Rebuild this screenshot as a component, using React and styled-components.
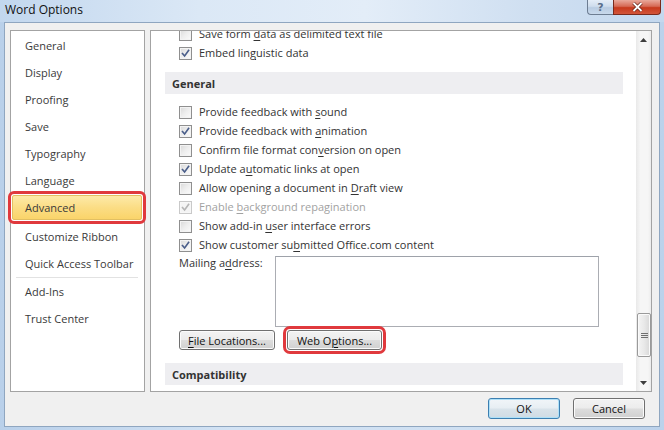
import React from "react";
import styled, { createGlobalStyle, css } from "styled-components";

const GlobalStyle = createGlobalStyle`
  html, body { margin: 0; padding: 0; background: #ffffff; }
  body { font-family: "Open Sans", "Noto Sans", Arial, sans-serif; }
  * { box-sizing: border-box; }
`;

const FONT = `"Open Sans", "Noto Sans", "Liberation Sans", sans-serif`;

const Window = styled.div`
  width: 664px;
  height: 430px;
  display: flex;
  flex-direction: column;
  background: linear-gradient(to right, #b9d0ea 0%, #d3e3f4 35%, #cfe0f2 70%, #bcd2eb 100%);
  font-family: ${FONT};
  overflow: hidden;
`;

const TitleBar = styled.div`
  height: 22px;
  flex: none;
  display: flex;
  justify-content: space-between;
  align-items: flex-start;
  background: linear-gradient(to right, #c2d7ee 0%, #dbe8f6 30%, #e3edf8 55%, #cfdff1 80%, #c4d8ee 100%);
`;

const Title = styled.div`
  padding: 2px 0 0 5px;
  font-size: 12px;
  line-height: 15px;
  color: #111;
`;

const Caption = styled.div`
  display: flex;
  margin-right: 3px;
`;

const CaptionButton = styled.div`
  height: 15px;
  display: flex;
  align-items: center;
  justify-content: center;
  border: 1px solid #6d7d92;
  border-top: none;
  ${(p) =>
    p.$close
      ? css`
          width: 48px;
          border-radius: 0 0 4px 0;
          background: linear-gradient(#e9a99b 0%, #d66a55 45%, #c7391c 55%, #d2553a 100%);
          border-color: #7a2a1c;
        `
      : css`
          width: 26px;
          border-right: none;
          border-radius: 0 0 0 4px;
          background: linear-gradient(#e4edf7 0%, #cfdded 45%, #b9cce2 55%, #c8d9ec 100%);
        `}
`;

const HelpGlyph = styled.span`
  font-family: "DejaVu Sans", sans-serif;
  font-size: 11px;
  font-weight: bold;
  line-height: 13px;
  color: #5a6f8c;
`;

const Client = styled.div`
  flex: 1;
  margin: 0 4px 3px 4px;
  border: 1px solid #8fa6c0;
  background: #f0f0f0;
  padding: 7px 7px 0 5px;
  display: flex;
  flex-direction: column;
`;

const Panels = styled.div`
  height: 362px;
  display: flex;
  gap: 5px;
`;

const NavPanel = styled.div`
  width: 135px;
  flex: none;
  background: #fff;
  border: 1px solid #a3a3a3;
  padding-top: 1px;
  display: flex;
  flex-direction: column;
`;

const NavItem = styled.div`
  height: 25px;
  margin: 1px 2px 1px 1px;
  padding-left: 12px;
  display: flex;
  align-items: center;
  font-size: 11px;
  color: #3a3a3a;
  border: 1px solid transparent;
  border-radius: 2px;
  ${(p) =>
    p.$selected &&
    css`
      margin-bottom: 3px;
      background: linear-gradient(#fdeaa8 0%, #fbdd85 50%, #fad46a 100%);
      border-color: #e2bf62;
      outline: 3px solid #e0393d;
      outline-offset: 1px;
    `}
`;

const NavSep = styled.div`
  height: 1px;
  margin: 0 6px 0 5px;
  background: #e2e2e2;
`;

const ContentPanel = styled.div`
  flex: 1;
  display: flex;
  background: #fff;
  border: 1px solid #a3a3a3;
  overflow: hidden;
`;

const Viewport = styled.div`
  flex: 1;
  overflow: hidden;
`;

const Content = styled.div`
  margin-top: -7px;
  padding: 0 13px 0 14px;
  display: flex;
  flex-direction: column;
`;

const Row = styled.div`
  height: 19px;
  padding-left: 14px;
  display: flex;
  align-items: center;
  gap: 7px;
  font-size: 11px;
  color: ${(p) => (p.$disabled ? "#a2a2a2" : "#333")};
  white-space: nowrap;
`;

const Box = styled.span`
  width: 13px;
  height: 13px;
  flex: none;
  margin-top: 1px;
  display: flex;
  align-items: center;
  justify-content: center;
  border: 1px solid ${(p) => (p.$disabled ? "#c9c9c9" : "#8f8f8f")};
  background: ${(p) =>
    p.$disabled ? "#f4f4f4" : "linear-gradient(135deg, #d8d8d8 0%, #eeeeee 50%, #fbfbfb 100%)"};
  box-shadow: inset 0 0 0 1px ${(p) => (p.$disabled ? "#f7f7f7" : "#f3f3f3")};
`;

const Key = styled.span`
  text-decoration: underline;
  text-underline-offset: 2px;
`;

const SectionHeader = styled.div`
  height: 22px;
  margin: ${(p) => p.$m || "0"};
  padding-left: 7px;
  display: flex;
  align-items: center;
  background: #eeeef1;
  font-size: 11px;
  font-weight: bold;
  color: #333;
`;

const MailRow = styled.div`
  margin-top: 2px;
  padding-left: 14px;
  display: flex;
  align-items: flex-start;
`;

const MailLabel = styled.div`
  width: 96px;
  flex: none;
  font-size: 11px;
  line-height: 13px;
  color: #333;
`;

const AddressBox = styled.div`
  width: 324px;
  height: 71px;
  border: 1px solid #abadb3;
  border-top-color: #9ea2aa;
  background: #fff;
`;

const ButtonRow = styled.div`
  margin-top: 3px;
  padding-left: 14px;
  display: flex;
  gap: 12px;
`;

const Button = styled.div`
  width: ${(p) => p.$w}px;
  height: ${(p) => p.$h || 20}px;
  flex: none;
  display: flex;
  align-items: center;
  justify-content: center;
  font-size: 11px;
  color: #111;
  border: 1px solid #707070;
  border-radius: 3px;
  background: linear-gradient(#f3f3f3 0%, #ececec 48%, #dddddd 52%, #d0d0d0 100%);
  box-shadow: inset 0 0 0 1px #fbfbfb;
  ${(p) =>
    p.$default &&
    css`
      border-color: #3c7fb1;
      box-shadow: inset 0 0 0 1px #aee0f8;
      background: linear-gradient(#f1f5f8 0%, #e7eef3 48%, #d9e3ea 52%, #cfdbe4 100%);
    `}
  ${(p) =>
    p.$marked &&
    css`
      outline: 3px solid #e0393d;
      outline-offset: 1px;
    `}
`;

const ScrollBar = styled.div`
  width: 15px;
  flex: none;
  display: flex;
  flex-direction: column;
  background: linear-gradient(to right, #e9e9e9 0%, #f6f6f6 30%, #f6f6f6 80%, #ececec 100%);
`;

const Arrow = styled.div`
  height: 17px;
  flex: none;
  display: flex;
  align-items: center;
  justify-content: center;
`;

const Track = styled.div`
  flex: 1;
  display: flex;
  flex-direction: column;
`;

const Thumb = styled.div`
  height: 44px;
  margin: 0 0 0 1px;
  display: flex;
  align-items: center;
  justify-content: center;
  border: 1px solid #9a9a9a;
  border-radius: 2px;
  background: linear-gradient(to right, #f4f4f4 0%, #e9e9e9 50%, #d8d8d8 100%);
  box-shadow: inset 0 0 0 1px #fafafa;
`;

const Footer = styled.div`
  padding: 6px 7px 0 0;
  display: flex;
  justify-content: flex-end;
  gap: 13px;
`;

const Check = ({ disabled }) => (
  <svg width="9" height="9" viewBox="0 0 9 9">
    <path
      d="M1.5 4.6 L3.6 7 L7.6 1.4"
      fill="none"
      stroke={disabled ? "#b5b5b5" : "#4a5e8a"}
      strokeWidth="1.6"
      strokeLinecap="square"
    />
  </svg>
);

const CheckRow = ({ checked, disabled, children }) => (
  <Row $disabled={disabled}>
    <Box $disabled={disabled}>{checked && <Check disabled={disabled} />}</Box>
    <span>{children}</span>
  </Row>
);

const Tri = ({ down }) => (
  <svg width="7" height="4" viewBox="0 0 7 4">
    <path d={down ? "M0 0 H7 L3.5 4 Z" : "M0 4 H7 L3.5 0 Z"} fill="#3d3d3d" />
  </svg>
);

const navTop = ["General", "Display", "Proofing", "Save", "Typography", "Language"];

export default function App() {
  const thumbPos = 265;
  return (
    <>
      <GlobalStyle />
      <Window>
        <TitleBar>
          <Title>Word Options</Title>
          <Caption>
            <CaptionButton>
              <HelpGlyph>?</HelpGlyph>
            </CaptionButton>
            <CaptionButton $close>
              <svg width="11" height="10" viewBox="0 0 11 10">
                <path d="M1.5 1 L9.5 9 M9.5 1 L1.5 9" stroke="#5a1a10" strokeWidth="3.2" />
                <path d="M1.5 1 L9.5 9 M9.5 1 L1.5 9" stroke="#ffffff" strokeWidth="1.8" />
              </svg>
            </CaptionButton>
          </Caption>
        </TitleBar>
        <Client>
          <Panels>
            <NavPanel>
              {navTop.map((n) => (
                <NavItem key={n}>{n}</NavItem>
              ))}
              <NavItem $selected>Advanced</NavItem>
              <NavItem>Customize Ribbon</NavItem>
              <NavItem>Quick Access Toolbar</NavItem>
              <NavSep />
              <NavItem>Add-Ins</NavItem>
              <NavItem>Trust Center</NavItem>
            </NavPanel>
            <ContentPanel>
              <Viewport>
                <Content>
                  <CheckRow>
                    Save form <Key>d</Key>ata as delimited text file
                  </CheckRow>
                  <CheckRow checked>
                    Embed lin<Key>g</Key>uistic data
                  </CheckRow>
                  <SectionHeader $m="10px 0 8px 0">General</SectionHeader>
                  <CheckRow>
                    Provide feedback with <Key>s</Key>ound
                  </CheckRow>
                  <CheckRow checked>
                    Provide feedback with <Key>a</Key>nimation
                  </CheckRow>
                  <CheckRow>
                    Confirm file format con<Key>v</Key>ersion on open
                  </CheckRow>
                  <CheckRow checked>
                    Update a<Key>u</Key>tomatic links at open
                  </CheckRow>
                  <CheckRow>
                    Allow opening a document in <Key>D</Key>raft view
                  </CheckRow>
                  <CheckRow checked disabled>
                    Enable <Key>b</Key>ackground repagination
                  </CheckRow>
                  <CheckRow>
                    Show add-in <Key>u</Key>ser interface errors
                  </CheckRow>
                  <CheckRow checked>
                    Show customer su<Key>b</Key>mitted Office.com content
                  </CheckRow>
                  <MailRow>
                    <MailLabel>
                      Mailing a<Key>d</Key>dress:
                    </MailLabel>
                    <AddressBox />
                  </MailRow>
                  <ButtonRow>
                    <Button $w={96}>
                      <span>
                        <Key>F</Key>ile Locations...
                      </span>
                    </Button>
                    <Button $w={95} $marked>
                      <span>
                        Web O<Key>p</Key>tions...
                      </span>
                    </Button>
                  </ButtonRow>
                  <SectionHeader $m="13px 0 0 0">Compatibility</SectionHeader>
                </Content>
              </Viewport>
              <ScrollBar>
                <Arrow>
                  <Tri />
                </Arrow>
                <Track>
                  <Thumb style={{ marginTop: thumbPos }}>
                    <svg width="7" height="7" viewBox="0 0 7 7">
                      <path d="M0 1.5 H7 M0 3.5 H7 M0 5.5 H7" stroke="#6f6f6f" strokeWidth="1" />
                    </svg>
                  </Thumb>
                </Track>
                <Arrow>
                  <Tri down />
                </Arrow>
              </ScrollBar>
            </ContentPanel>
          </Panels>
          <Footer>
            <Button $w={72} $h={21} $default>
              OK
            </Button>
            <Button $w={72} $h={21}>
              Cancel
            </Button>
          </Footer>
        </Client>
      </Window>
    </>
  );
}
